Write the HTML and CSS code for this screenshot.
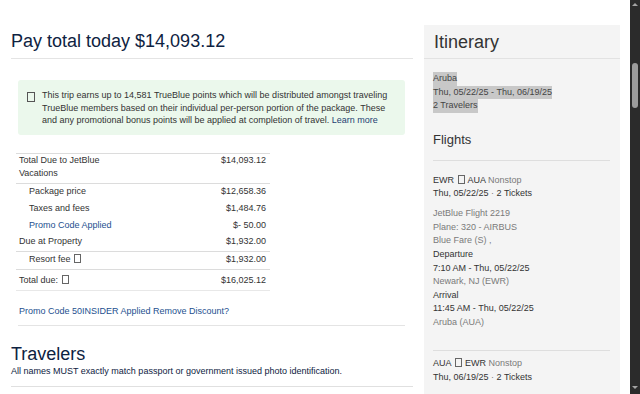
FILE: index.html
```html
<!DOCTYPE html>
<html lang="en">
<head>
  <meta charset="UTF-8" />
  <meta name="viewport" content="width=device-width, initial-scale=1" />
  <title>Checkout - Pay total today</title>
  <link rel="stylesheet" href="styles.css">
</head>
<body>
  <div class="screen">
    <div class="page">

      <main class="main">
        <h1 class="title">Pay total today $14,093.12</h1>

        <div class="points">
          <span class="tofu tofu-lg"></span>
          <p class="points-text">This trip earns up to 14,581 TrueBlue points which will be distributed amongst traveling TrueBlue members based on their individual per-person portion of the package. These and any promotional bonus points will be applied at completion of travel. <a class="link-dark" href="#">Learn more</a></p>
        </div>

        <table class="totals">
          <tbody>
            <tr class="row-main">
              <td>Total Due to JetBlue<br>Vacations</td>
              <td class="amount">$14,093.12</td>
            </tr>
            <tr>
              <td class="sub">Package price</td>
              <td class="amount">$12,658.36</td>
            </tr>
            <tr>
              <td class="sub">Taxes and fees</td>
              <td class="amount">$1,484.76</td>
            </tr>
            <tr>
              <td class="sub promo-label">Promo Code Applied</td>
              <td class="amount">$- 50.00</td>
            </tr>
            <tr class="row-line">
              <td>Due at Property</td>
              <td class="amount">$1,932.00</td>
            </tr>
            <tr class="row-line">
              <td class="sub">Resort fee <span class="tofu"></span></td>
              <td class="amount">$1,932.00</td>
            </tr>
            <tr class="row-total">
              <td>Total due: <span class="tofu"></span></td>
              <td class="amount">$16,025.12</td>
            </tr>
          </tbody>
        </table>

        <div class="promo">
          <a class="link" href="#">Promo Code 50INSIDER Applied Remove Discount?</a>
        </div>

        <h2 class="section-title">Travelers</h2>
        <p class="note">All names MUST exactly match passport or government issued photo identification.</p>
      </main>

      <aside class="itinerary">
        <div class="itinerary-head">Itinerary</div>
        <div class="itinerary-body">
          <div class="trip">
            <div class="hl">Aruba</div>
            <div class="hl">Thu, 05/22/25 - Thu, 06/19/25</div>
            <div class="hl">2 Travelers</div>
          </div>

          <div class="flights-title">Flights</div>

          <div class="flight">
            <div class="dark">EWR <span class="tofu"></span> AUA <span class="muted">Nonstop</span></div>
            <div class="dark">Thu, 05/22/25 <span class="muted">&middot;</span> 2 Tickets</div>
            <div class="flight-detail">
              <div class="muted">JetBlue Flight 2219</div>
              <div class="muted">Plane: 320 - AIRBUS</div>
              <div class="muted">Blue Fare (S) ,</div>
              <div class="dark">Departure</div>
              <div class="dark">7:10 AM - Thu, 05/22/25</div>
              <div class="muted">Newark, NJ (EWR)</div>
              <div class="dark">Arrival</div>
              <div class="dark">11:45 AM - Thu, 05/22/25</div>
              <div class="muted">Aruba (AUA)</div>
            </div>
          </div>

          <div class="flight">
            <div class="dark">AUA <span class="tofu"></span> EWR <span class="muted">Nonstop</span></div>
            <div class="dark">Thu, 06/19/25 <span class="muted">&middot;</span> 2 Tickets</div>
          </div>
        </div>
      </aside>

    </div>

    <div class="scrollbar">
      <span class="arrow-up"></span>
      <span class="thumb"></span>
      <span class="track"></span>
      <span class="arrow-down"></span>
    </div>
  </div>
</body>
</html>
```

FILE: styles.css
```css
:root {
  --navy: #0e2241;
  --text: #333;
  --muted: #7a7a7a;
  --link: #24508f;
  --line: #dcdcdc;
  --panel: #f4f4f4;
  --green: #ebf8ec;
}
body {
  margin: 0;
  font-family: "Liberation Sans", Arial, sans-serif;
  color: var(--text);
  background: #fff;
}
.screen {
  display: flex;
  height: 394px;
  overflow: hidden;
}
.page {
  width: 630px;
  display: flex;
  align-items: flex-start;
  gap: 11px;
  padding-left: 11px;
  box-sizing: border-box;
}

/* left column */
.main {
  width: 402px;
  flex: none;
  padding-top: 29px;
}
.title {
  margin: 0;
  font-size: 18px;
  line-height: 24px;
  font-weight: normal;
  color: var(--navy);
  padding-bottom: 5px;
  border-bottom: 1px solid #e4e4e4;
}
.points {
  display: flex;
  align-items: flex-start;
  gap: 7px;
  margin: 21px 8px 0 7px;
  padding: 9px 11px 8px 9px;
  background: var(--green);
  border-radius: 3px;
}
.points-text {
  margin: 0;
  font-size: 9px;
  line-height: 12.6px;
}
.link-dark {
  color: #1e3f73;
  text-decoration: none;
}
.tofu {
  display: inline-block;
  width: 5px;
  height: 7px;
  margin: 0 1px;
  border: 1px solid #666;
  vertical-align: -1px;
}
.tofu-lg {
  flex: none;
  width: 6px;
  height: 8px;
  margin: 3px 0 0;
  border-color: #555;
}

.totals {
  margin: 18px 0 0 5px;
  width: 254px;
  border-collapse: collapse;
  font-size: 9px;
  line-height: 13px;
}
.totals td {
  padding: 0.7px 4px 3px 3px;
  vertical-align: top;
}
.totals .sub {
  padding-left: 13px;
}
.totals .amount {
  text-align: right;
}
.promo-label {
  color: var(--link);
}
.row-main td {
  border-top: 1px solid var(--line);
  border-bottom: 1px solid var(--line);
}
.row-line td {
  border-bottom: 1px solid var(--line);
}
.row-total td {
  padding-top: 4px;
  padding-bottom: 3.5px;
  border-bottom: 1px solid #e8e8e8;
}

.promo {
  margin: 13.5px 8px 0 7px;
  padding: 0 0 7.5px 1px;
  border-bottom: 1px solid #e4e4e4;
  font-size: 9px;
  line-height: 13px;
}
.link {
  color: var(--link);
  text-decoration: none;
}
.section-title {
  margin: 16.7px 0 0;
  font-size: 18px;
  line-height: 22px;
  font-weight: normal;
  color: var(--navy);
}
.note {
  margin: 0;
  padding-bottom: 8px;
  border-bottom: 1px solid #e0e0e0;
  font-size: 9px;
  line-height: 13px;
  color: var(--navy);
}

/* itinerary side panel */
.itinerary {
  width: 196px;
  flex: none;
  margin-top: 25px;
  min-height: 400px;
  background: var(--panel);
}
.itinerary-head {
  padding: 5px 10px 4px;
  font-size: 18px;
  line-height: 24px;
  color: #333;
  border-bottom: 1px solid #e2e2e2;
}
.itinerary-body {
  padding: 13.25px 10px 0 9px;
  font-size: 9px;
  line-height: 13.5px;
}
.hl {
  width: fit-content;
  background: #c8c8c8;
  color: #444;
}
.flights-title {
  margin-top: 19px;
  padding-bottom: 12.3px;
  border-bottom: 1px solid #dedede;
  font-size: 13px;
  line-height: 16px;
  color: #333;
  margin-bottom: 12.5px;
}
.flight {
  line-height: 13.6px;
  padding-bottom: 20.4px;
}
.flight + .flight {
  border-top: 1px solid #dedede;
  padding-top: 6.2px;
}
.flight-detail {
  margin-top: 6.5px;
}
.dark {
  color: #333;
}
.muted {
  color: var(--muted);
}

/* window scrollbar */
.scrollbar {
  width: 10px;
  flex: none;
  display: flex;
  flex-direction: column;
  align-items: center;
  background: #2b2b2b;
}
.arrow-up,
.arrow-down {
  width: 0;
  height: 0;
  border-left: 3px solid transparent;
  border-right: 3px solid transparent;
}
.arrow-up {
  margin-top: 3px;
  border-bottom: 3px solid #a3a3a3;
}
.arrow-down {
  margin-bottom: 5px;
  border-top: 3px solid #a3a3a3;
}
.thumb {
  margin-top: 57px;
  width: 6px;
  height: 45px;
  border-radius: 3px;
  background: #9c9c9c;
}
.track {
  flex: 1;
}
```
